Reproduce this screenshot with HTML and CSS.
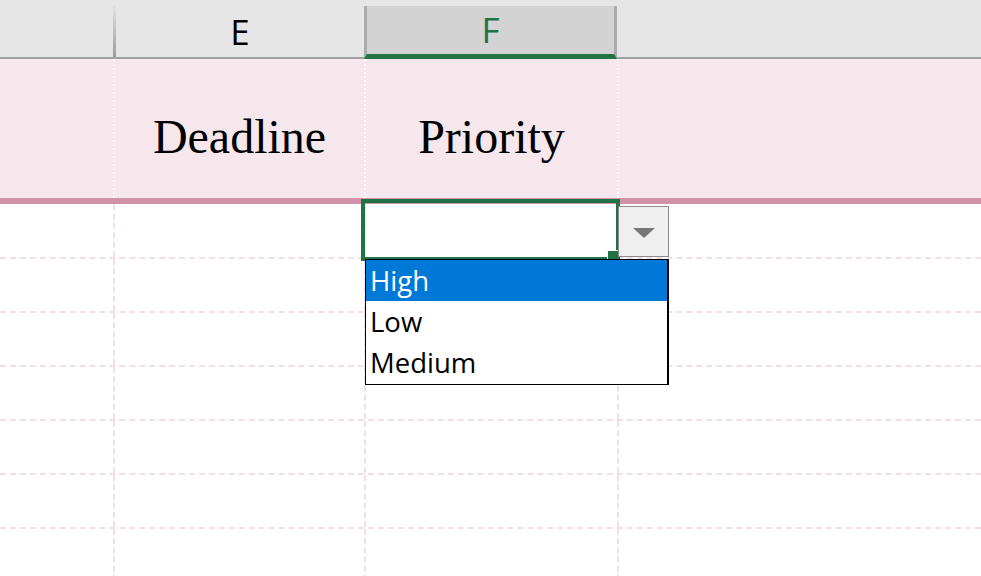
FILE: index.html
```html
<!DOCTYPE html>
<html lang="en">

<head>
  <meta charset="UTF-8">
  <meta name="viewport" content="width=device-width, initial-scale=1.0">
  <title>Priority dropdown</title>
  <link rel="stylesheet" href="styles.css">
</head>

<body>
  <div class="sheet">
    <!-- Column headings -->
    <header class="col-heads">
      <div class="col-head"></div>
      <div class="col-head col-sep">E</div>
      <div class="col-head is-active">F</div>
      <div class="col-head"></div>
    </header>

    <!-- Table title row -->
    <div class="row title-row">
      <div class="cell"></div>
      <div class="cell">Deadline</div>
      <div class="cell">Priority</div>
      <div class="cell"></div>
    </div>

    <!-- Empty data rows -->
    <div class="row data-row first-row"><div class="cell"></div><div class="cell"></div><div class="cell"></div><div class="cell"></div></div>
    <div class="row data-row"><div class="cell"></div><div class="cell"></div><div class="cell"></div><div class="cell"></div></div>
    <div class="row data-row"><div class="cell"></div><div class="cell"></div><div class="cell"></div><div class="cell"></div></div>
    <div class="row data-row"><div class="cell"></div><div class="cell"></div><div class="cell"></div><div class="cell"></div></div>
    <div class="row data-row"><div class="cell"></div><div class="cell"></div><div class="cell"></div><div class="cell"></div></div>
    <div class="row data-row"><div class="cell"></div><div class="cell"></div><div class="cell"></div><div class="cell"></div></div>
    <div class="row data-row"><div class="cell"></div><div class="cell"></div><div class="cell"></div><div class="cell"></div></div>

    <!-- Active cell and its validation list -->
    <div class="selection"></div>
    <div class="fill-handle"></div>
    <button class="dd-button" aria-label="Open list"><span class="dd-arrow"></span></button>
    <ul class="dd-list">
      <li class="dd-item is-selected">High</li>
      <li class="dd-item">Low</li>
      <li class="dd-item">Medium</li>
    </ul>
  </div>
</body>

</html>
```

FILE: styles.css
```css
/* Base */
body {
  margin: 0;
  background: #fff;
  overflow: hidden;
  font-family: 'Open Sans', 'Noto Sans', sans-serif;
}

.sheet {
  position: relative;
  width: 981px;
  height: 576px;
  overflow: hidden;
}

/* Column headings */
.col-heads {
  display: grid;
  grid-template-columns: 113px 251px 253px 1fr;
  height: 59px;
  background: #e6e6e6;
  box-shadow: inset 0 -2px 0 #a2a2a2;
}

.col-head {
  box-sizing: border-box;
  margin-top: 6px;
  height: 53px;
  font-size: 35px;
  line-height: 51px;
  text-align: center;
  color: #000;
}

.col-sep {
  border-left: 3px solid;
  border-image: linear-gradient(to bottom, #e2e2e2, #9c9c9c) 1;
  height: 51px;
}

.col-head.is-active {
  background: #d3d3d3;
  color: #217346;
  border-left: 3px solid #ababab;
  border-right: 3px solid #ababab;
  border-bottom: 5px solid #217346;
  line-height: 48px;
}

/* Rows */
.row {
  display: grid;
  grid-template-columns: 113px 251px 253px 1fr;
  box-sizing: border-box;
}

.cell {
  box-sizing: border-box;
}

.row .cell + .cell {
  border-left: 2px dashed #f3dee5;
}

.title-row {
  height: 145px;
  background: #f5e7ec;
  border-bottom: 6px solid #d191a6;
}

.title-row .cell {
  padding-top: 54px;
  font-family: 'Liberation Serif', 'DejaVu Serif', serif;
  font-size: 48px;
  line-height: 48px;
  text-align: center;
  color: #000;
}

.title-row .cell + .cell {
  border-left: 2px dotted rgba(255, 255, 255, 0.85);
}

.data-row {
  height: 54px;
  border-bottom: 2px dashed #f3dee5;
}

.data-row.first-row {
  height: 55px;
}

/* Active cell */
.selection {
  position: absolute;
  left: 361px;
  top: 199px;
  width: 259px;
  height: 62px;
  box-sizing: border-box;
  border: 4px solid #217346;
}

.fill-handle {
  position: absolute;
  left: 608px;
  top: 251px;
  width: 11px;
  height: 10px;
  background: #217346;
  box-shadow: -1px -1px 0 #fff;
}

/* Dropdown button */
.dd-button {
  position: absolute;
  left: 618px;
  top: 206px;
  width: 51px;
  height: 51px;
  margin: 0;
  padding: 0;
  box-sizing: border-box;
  background: #efefef;
  border: 1px solid #8c8c8c;
  display: flex;
  align-items: center;
  justify-content: center;
}

.dd-arrow {
  width: 0;
  height: 0;
  border-left: 11px solid transparent;
  border-right: 11px solid transparent;
  border-top: 10px solid #777;
  margin-top: 2px;
}

/* Dropdown list */
.dd-list {
  position: absolute;
  left: 365px;
  top: 259px;
  width: 304px;
  height: 126px;
  margin: 0;
  padding: 0;
  list-style: none;
  box-sizing: border-box;
  background: #fff;
  border: 1px solid #000;
  border-right-width: 2px;
}

.dd-item {
  height: 41px;
  padding-left: 4px;
  font-size: 27.5px;
  line-height: 41px;
  color: #000;
}

.dd-item.is-selected {
  background: #0078d7;
  color: #fff;
}
```
